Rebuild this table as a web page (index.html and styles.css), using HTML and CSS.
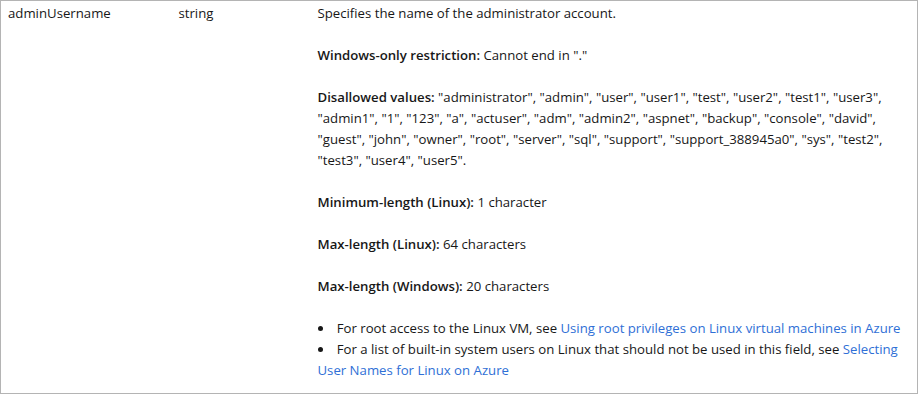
FILE: index.html
```html
<!DOCTYPE html>
<html lang="en">
<head>
    <meta charset="UTF-8">
    <title>Parameters</title>
    <link rel="stylesheet" href="styles.css">
</head>
<body>
    <table class="params">
        <tr>
            <td class="col-name">adminUsername</td>
            <td class="col-type">string</td>
            <td class="col-desc">
                <p>Specifies the name of the administrator account.</p>
                <p><strong>Windows-only restriction:</strong> Cannot end in "."</p>
                <p><strong>Disallowed values:</strong> "administrator", "admin", "user", "user1", "test", "user2", "test1", "user3", "admin1", "1", "123", "a", "actuser", "adm", "admin2", "aspnet", "backup", "console", "david", "guest", "john", "owner", "root", "server", "sql", "support", "support_388945a0", "sys", "test2", "test3", "user4", "user5".</p>
                <p><strong>Minimum-length (Linux):</strong> 1 character</p>
                <p><strong>Max-length (Linux):</strong> 64 characters</p>
                <p><strong>Max-length (Windows):</strong> 20 characters</p>
                <ul>
                    <li>For root access to the Linux VM, see <a href="#">Using root privileges on Linux virtual machines in Azure</a></li>
                    <li>For a list of built-in system users on Linux that should not be used in this field, see <a href="#">Selecting User Names for Linux on Azure</a></li>
                </ul>
            </td>
        </tr>
    </table>
</body>
</html>
```

FILE: styles.css
```css
* {
    margin: 0;
    padding: 0;
    box-sizing: border-box;
}

body {
    font-family: 'Open Sans', 'Noto Sans', sans-serif;
    font-size: 13.2px;
    line-height: 21px;
    color: #171717;
    background: white;
}

.params {
    width: 918px;
    border-collapse: collapse;
    border: 1px solid #b4b4b4;
}

.params td {
    vertical-align: top;
    padding: 2px 4px 0 7px;
}

.col-name {
    width: 171px;
}

.col-type {
    width: 139px;
}

.col-desc p {
    margin-bottom: 21px;
}

.col-desc strong {
    font-weight: 600;
}

.col-desc ul {
    list-style-position: inside;
    margin-bottom: 12px;
}

.col-desc a {
    color: #2f6fd6;
    text-decoration: none;
}
```
